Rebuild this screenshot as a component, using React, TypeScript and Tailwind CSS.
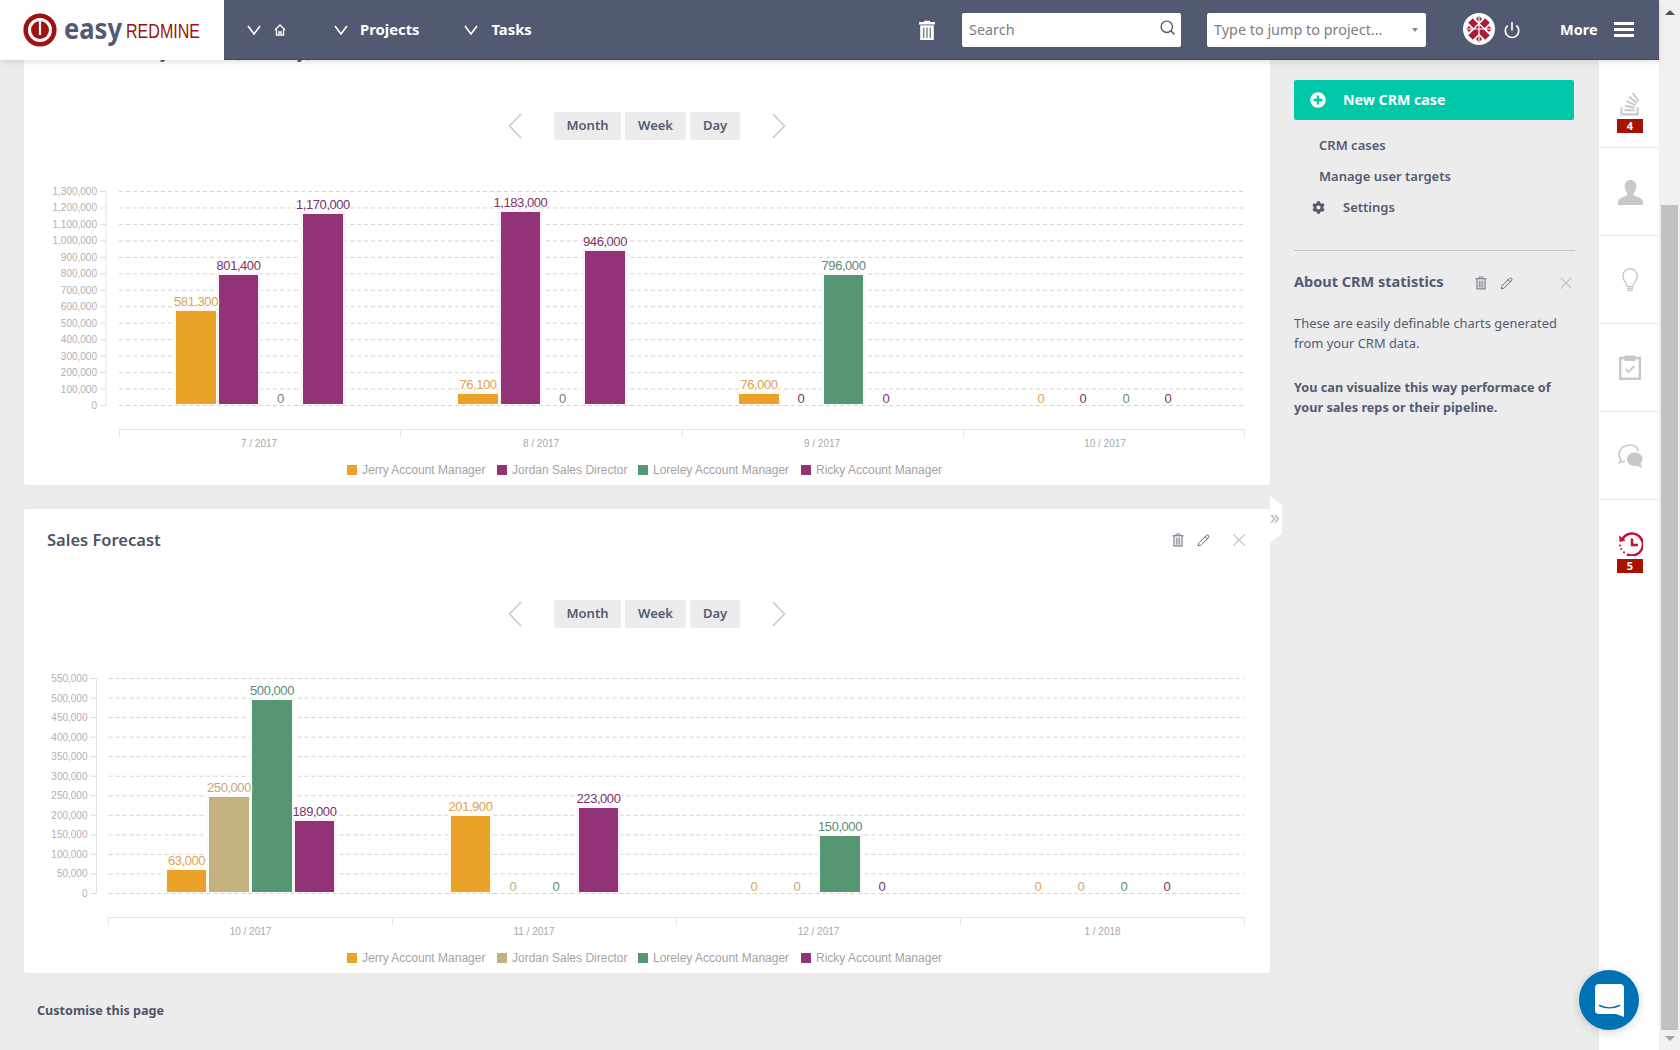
import { FaCog, FaPlusCircle, FaStackOverflow } from 'react-icons/fa';
import { Pencil, Power, Search } from 'lucide-react';

const ui = '[font-family:"Noto_Sans",sans-serif]';

const ORANGE = '#e9a227';
const PURPLE = '#933377';
const GREEN = '#579673';
const TAN = '#c3b17f';

// data labels are a bit duller than the bars
const labelColor: Record<string, string> = {
  [ORANGE]: '#dfa24f',
  [PURPLE]: '#7e3069',
  [GREEN]: '#5d8a75',
  [TAN]: '#b9ab85',
};

type Bar = { x0: number; x1: number; top: number; label: string; color: string };
type Zero = { x: number; color: string };

type ChartProps = {
  top: number;
  ticks: string[];
  gridTop: number;
  gridBottom: number;
  axisX: number;
  gridX: number;
  labelX: number;
  barBottom: number;
  bars: Bar[];
  zeros: Zero[];
  zeroY: number;
  baseY: number;
  baseTicks: number[];
  periods: { x: number; label: string }[];
};

function Chart(p: ChartProps) {
  const step = (p.gridBottom - p.gridTop) / (p.ticks.length - 1);
  return (
    <svg
      viewBox={`24 ${p.top} 1246 282`}
      className="block h-[282px] w-[1246px]"
      fontFamily='"Liberation Sans", Arial, sans-serif'
    >
      {p.ticks.map((t, i) => {
        const y = p.gridTop + i * step;
        return (
          <g key={t}>
            <line x1={p.gridX} x2={1244} y1={y} y2={y} stroke="#d4d4d4" strokeDasharray="4 3" />
            <line x1={p.axisX - 6} x2={p.axisX} y1={y} y2={y} stroke="#dcdcdc" />
            <text x={p.labelX} y={y} textAnchor="end" dominantBaseline="central" fontSize="10" fill="#b0b0b0">
              {t}
            </text>
          </g>
        );
      })}
      <line x1={p.axisX} x2={p.axisX} y1={p.gridTop} y2={p.gridBottom} stroke="#e2e2e2" />

      {p.bars.map((b) => (
        <g key={b.label + b.x0}>
          <rect x={b.x0 - 2.5} y={b.top - 2.5} width={b.x1 - b.x0 + 5} height={p.barBottom - b.top + 3} fill="#fff" />
          <rect x={b.x0 - 2.5} y={b.top - 2.5} width={b.x1 - b.x0 + 5} height={p.barBottom - b.top + 3} fill={b.color} opacity="0.06" />
          <rect x={b.x0} y={b.top} width={b.x1 - b.x0} height={p.barBottom - b.top} fill={b.color} />
        </g>
      ))}
      {p.bars.map((b) => (
        <text
          key={b.label + b.x0}
          x={(b.x0 + b.x1) / 2}
          y={b.top - 9.5}
          textAnchor="middle"
          dominantBaseline="central"
          fontSize="13"
          letterSpacing="-0.45"
          fill={labelColor[b.color]}
          stroke="#fff"
          strokeWidth="2"
          paintOrder="stroke"
        >
          {b.label}
        </text>
      ))}
      {p.zeros.map((z) => (
        <text
          key={z.x}
          x={z.x}
          y={p.zeroY}
          textAnchor="middle"
          dominantBaseline="central"
          fontSize="13"
          fill={labelColor[z.color]}
          stroke="#fff"
          strokeWidth="2"
          paintOrder="stroke"
        >
          0
        </text>
      ))}

      <line x1={p.gridX} x2={1245} y1={p.baseY} y2={p.baseY} stroke="#e4e4e4" />
      {p.baseTicks.map((x) => (
        <line key={x} x1={x} x2={x} y1={p.baseY} y2={p.baseY + 7} stroke="#e4e4e4" />
      ))}
      {p.periods.map((d) => (
        <text key={d.label} x={d.x} y={p.baseY + 14} textAnchor="middle" dominantBaseline="central" fontSize="10" fill="#a8a8a8">
          {d.label}
        </text>
      ))}
    </svg>
  );
}

function TrashIcon({ className }: { className: string }) {
  return (
    <svg viewBox="0 0 16 18" className={className} fill="none" stroke="currentColor">
      <path d="M1 3.5h14" strokeWidth="1.6" />
      <path d="M5.5 3V1.2h5V3" strokeWidth="1.2" />
      <path d="M2.8 4v12.6h10.4V4" strokeWidth="1.5" />
      <path d="M5.8 6v9M8 6v9M10.2 6v9" strokeWidth="1.2" />
    </svg>
  );
}

function HeaderTrash() {
  return (
    <svg viewBox="0 0 16 20" className="h-5 w-4">
      <path d="M5 2V.8h6V2h5v2.400H0V2z" fill="#fff" />
      <path d="M1.200 5.400h13.600V20H1.200z" fill="#fff" />
      <path d="M4.700 7.500v10.500M8 7.500v10.500M11.300 7.500v10.500" stroke="#7b8295" strokeWidth="1.400" />
    </svg>
  );
}

function CloseIcon() {
  return (
    <svg viewBox="0 0 12 12" className="h-3 w-3" stroke="#c9c9c9" strokeWidth="1.4">
      <path d="M.5.5l11 11M11.5.5l-11 11" />
    </svg>
  );
}

function ChevronDown() {
  return (
    <svg viewBox="0 0 14 10" className="h-[10px] w-[14px]" fill="none" stroke="#fff" strokeWidth="1.6">
      <path d="M1 1l6 8 6-8" />
    </svg>
  );
}

function Pager({ dir }: { dir: 'left' | 'right' }) {
  return (
    <svg viewBox="0 0 14 26" className="h-[26px] w-[14px]" fill="none" stroke="#c9c9c9" strokeWidth="1.6">
      <path d={dir === 'left' ? 'M13 1L1.5 13 13 25' : 'M1 1l11.5 12L1 25'} />
    </svg>
  );
}

function Card({ title, chart, legend }: { title: string; chart: ChartProps; legend: { color: string; label: string; w: string }[] }) {
  return (
    <section className="h-[464px] w-[1246px] rounded-[3px] bg-white">
      <div className="flex h-[62px] items-center pl-[23px] pr-[25px]">
        <h2 className="mt-px text-[16.500px] font-semibold text-[#4c5468]">{title}</h2>
        <div className="ml-auto flex items-center">
          <TrashIcon className="h-[14px] w-[14px] text-[#7b8190]" />
          <Pencil className="ml-3 h-[13px] w-[13px] text-[#555b6b]" strokeWidth={1.7} />
          <span className="ml-[23px]"><CloseIcon /></span>
        </div>
      </div>
      <div className="mt-[29px] flex items-center justify-center">
        <Pager dir="left" />
        <div className="mx-8 flex gap-1 text-[13px] font-semibold text-[#525b73]">
          <button className="flex h-7 w-[67px] items-center justify-center rounded-[2px] bg-[#ececec]">Month</button>
          <button className="flex h-7 w-[61px] items-center justify-center rounded-[2px] bg-[#ececec]">Week</button>
          <button className="flex h-7 w-[50px] items-center justify-center rounded-[2px] bg-[#ececec]">Day</button>
        </div>
        <Pager dir="right" />
      </div>
      <div className="mt-[31px]">
        <Chart {...chart} />
      </div>
      <div className='mt-[7px] flex h-5 items-center pl-[323px] text-[12px] text-[#a3a3a3] [font-family:"Liberation_Sans",Arial,sans-serif]'>
        {legend.map((l) => (
          <div key={l.label} className={`flex items-center ${l.w}`}>
            <span className="mr-[5px] h-[10px] w-[10px]" style={{ background: l.color }} />
            {l.label}
          </div>
        ))}
      </div>
    </section>
  );
}

const salesChart: ChartProps = {
  top: 171,
  ticks: ['1,300,000', '1,200,000', '1,100,000', '1,000,000', '900,000', '800,000', '700,000', '600,000', '500,000', '400,000', '300,000', '200,000', '100,000', '0'],
  gridTop: 191.5,
  gridBottom: 405.5,
  axisX: 106,
  gridX: 119,
  labelX: 97,
  barBottom: 404,
  bars: [
    { x0: 176, x1: 216, top: 311, label: '581,300', color: ORANGE },
    { x0: 219, x1: 258, top: 275, label: '801,400', color: PURPLE },
    { x0: 303, x1: 343, top: 214, label: '1,170,000', color: PURPLE },
    { x0: 458, x1: 498, top: 394, label: '76,100', color: ORANGE },
    { x0: 501, x1: 540, top: 212, label: '1,183,000', color: PURPLE },
    { x0: 585, x1: 625, top: 251, label: '946,000', color: PURPLE },
    { x0: 739, x1: 779, top: 394, label: '76,000', color: ORANGE },
    { x0: 824, x1: 863, top: 275, label: '796,000', color: GREEN },
  ],
  zeros: [
    { x: 280.5, color: GREEN },
    { x: 562.5, color: GREEN },
    { x: 801, color: PURPLE },
    { x: 886, color: PURPLE },
    { x: 1041, color: ORANGE },
    { x: 1083, color: PURPLE },
    { x: 1126, color: GREEN },
    { x: 1168, color: PURPLE },
  ],
  zeroY: 398,
  baseY: 429.5,
  baseTicks: [119.5, 400.5, 682.5, 963.5, 1244.5],
  periods: [
    { x: 259, label: '7 / 2017' },
    { x: 541, label: '8 / 2017' },
    { x: 822, label: '9 / 2017' },
    { x: 1105, label: '10 / 2017' },
  ],
};

const forecastChart: ChartProps = {
  top: 659,
  ticks: ['550,000', '500,000', '450,000', '400,000', '350,000', '300,000', '250,000', '200,000', '150,000', '100,000', '50,000', '0'],
  gridTop: 678.5,
  gridBottom: 893.5,
  axisX: 96.5,
  gridX: 108.5,
  labelX: 87.5,
  barBottom: 892,
  bars: [
    { x0: 167, x1: 206, top: 870, label: '63,000', color: ORANGE },
    { x0: 209, x1: 249, top: 797, label: '250,000', color: TAN },
    { x0: 252, x1: 292, top: 700, label: '500,000', color: GREEN },
    { x0: 295, x1: 334, top: 821, label: '189,000', color: PURPLE },
    { x0: 451, x1: 490, top: 816, label: '201,900', color: ORANGE },
    { x0: 579, x1: 618, top: 808, label: '223,000', color: PURPLE },
    { x0: 820, x1: 860, top: 836, label: '150,000', color: GREEN },
  ],
  zeros: [
    { x: 513, color: TAN },
    { x: 556, color: GREEN },
    { x: 754, color: ORANGE },
    { x: 797, color: TAN },
    { x: 882, color: PURPLE },
    { x: 1038, color: ORANGE },
    { x: 1081, color: TAN },
    { x: 1124, color: GREEN },
    { x: 1167, color: PURPLE },
  ],
  zeroY: 886,
  baseY: 917.5,
  baseTicks: [108.5, 392.5, 676.5, 960.5, 1244.5],
  periods: [
    { x: 250.5, label: '10 / 2017' },
    { x: 534, label: '11 / 2017' },
    { x: 818.5, label: '12 / 2017' },
    { x: 1102.5, label: '1 / 2018' },
  ],
};

const salesLegend = [
  { color: ORANGE, label: 'Jerry Account Manager', w: 'w-[150px]' },
  { color: PURPLE, label: 'Jordan Sales Director', w: 'w-[141px]' },
  { color: GREEN, label: 'Loreley Account Manager', w: 'w-[163px]' },
  { color: PURPLE, label: 'Ricky Account Manager', w: 'w-[150px]' },
];

const forecastLegend = [
  { color: ORANGE, label: 'Jerry Account Manager', w: 'w-[150px]' },
  { color: TAN, label: 'Jordan Sales Director', w: 'w-[141px]' },
  { color: GREEN, label: 'Loreley Account Manager', w: 'w-[163px]' },
  { color: PURPLE, label: 'Ricky Account Manager', w: 'w-[150px]' },
];

function Logo() {
  return (
    <svg viewBox="0 0 224 60" className="h-[60px] w-[224px]">
      <circle cx="40" cy="30" r="14.300" fill="#fff" stroke="#a01212" strokeWidth="4.600" />
      <circle cx="40" cy="30" r="9" fill="#a01212" />
      <rect x="38.900" y="20" width="2.200" height="15" fill="#fff" />
      <text x="64" y="39" fontSize="29" fontWeight="700" fill="#525b73" fontFamily='"Noto Sans", sans-serif' textLength="58" lengthAdjust="spacingAndGlyphs">
        easy
      </text>
      <text x="126" y="38" fontSize="21" fill="#961616" fontFamily='"Liberation Sans", sans-serif' textLength="74" lengthAdjust="spacingAndGlyphs">
        REDMINE
      </text>
    </svg>
  );
}

function Avatar() {
  return (
    <svg viewBox="0 0 32 32" className="h-8 w-8">
      <circle cx="16" cy="16" r="16" fill="#fff" />
      <g stroke="#aa1c35" strokeWidth="6.500">
        <path d="M7.500 7.500l17 17M24.500 7.500l-17 17" />
      </g>
      <g fill="#aa1c35">
        <path d="M16 2.500l3 3.500-3 3.500-3-3.500zM16 22.500l3 3.500-3 3.500-3-3.500zM6 13l3 3-3 3-3-3zM26 13l3 3-3 3-3-3z" />
      </g>
      <path d="M16 3v26M3 16h26M10.500 5l16 16M21.500 5l-16 16" stroke="#fff" strokeWidth="1.200" />
    </svg>
  );
}

function Badge({ n }: { n: number }) {
  return (
    <div className="mt-[3px] flex h-[14px] w-[26px] items-center justify-center bg-[#a81200] text-[11px] font-bold text-white">{n}</div>
  );
}

function Sidebar() {
  return (
    <aside className="flex w-[60px] flex-col bg-white pt-[60px]">
      <div className="flex h-[88px] flex-col items-center border-b border-[#ececec] pl-[2px] pt-[31px]">
        <FaStackOverflow className="h-[26px] w-[26px] text-[#cbcbcb]" />
        <div className="-mt-px"><Badge n={4} /></div>
      </div>
      <div className="flex h-[88px] flex-col items-center border-b border-[#ececec] pl-[2px] pt-8">
        <svg viewBox="0 0 25 25" className="h-[25px] w-[25px]" fill="#c8c8c8">
          <path d="M12.500 0c3.700 0 5.800 2.700 5.800 6.300 0 2.600-1 5-2.500 6.500v2.300c0 1.200 8 2 9.200 6.400V25H0v-3.500c1.200-4.400 9.200-5.200 9.200-6.400v-2.300C7.700 11.300 6.700 8.900 6.700 6.300 6.700 2.700 8.800 0 12.500 0z" />
        </svg>
      </div>
      <div className="flex h-[88px] flex-col items-center border-b border-[#ececec] pl-[2px] pt-8">
        <svg viewBox="0 0 16 25" className="h-[25px] w-4" fill="none" stroke="#c8c8c8" strokeWidth="1.4">
          <path d="M5 18.500c0-3.500-4.200-5.500-4.200-10.500C.8 3.800 4 .8 8 .8s7.200 3 7.200 7.200c0 5-4.200 7-4.200 10.500z" />
          <path d="M5 20.500h6M5.500 22.500h5" strokeWidth="1.6" />
        </svg>
      </div>
      <div className="flex h-[88px] flex-col items-center border-b border-[#ececec] pl-[2px] pt-[31px]">
        <svg viewBox="0 0 22 25" className="h-[25px] w-[22px]" fill="none" stroke="#c8c8c8">
          <path d="M6 3H1.200v20.800h19.600V3H16" strokeWidth="2.400" />
          <path d="M6 1h10v4.500H6z" fill="#c8c8c8" strokeWidth="1" />
          <path d="M6.500 14l3 3 6-6" strokeWidth="1.800" />
        </svg>
      </div>
      <div className="flex h-[88px] flex-col items-center border-b border-[#ececec] pl-[2px] pt-8">
        <svg viewBox="0 0 25 24" className="h-6 w-[25px]">
          <path d="M20.500 7.500C19.500 3.500 16 1 12 1 6 1 1 5 1 10.500c0 2 .8 3.800 2 5.200L1.500 18.500l5.500-1.500" fill="none" stroke="#c8c8c8" strokeWidth="1.600" />
          <path d="M16.500 8.500c4.400 0 8 2.700 8 6.500 0 1.800-.8 3.400-2 4.500L24.500 24l-6-2.200c-.6.100-1.300.2-2 .2-4.400 0-7.500-3-7.500-6.700 0-3.800 3.100-6.800 7.500-6.800z" fill="#c8c8c8" />
        </svg>
      </div>
      <div className="flex flex-1 flex-col items-center pl-[2px] pt-8">
        <svg viewBox="0 0 25 24" className="h-6 w-[25px]" fill="none" stroke="#c8102e" strokeWidth="2.500">
          <path d="M4.700 6.500A11 11 0 1 1 9 22.300" />
          <path d="M1 3.500l.6 6.600 6.300-1.700z" fill="#c8102e" stroke="none" />
          <path d="M14 6.500V13h6" />
          <path d="M2 13.500v.1M3.200 17v.1M6 20.300v.1" strokeLinecap="round" strokeWidth="2" />
        </svg>
        <Badge n={5} />
      </div>
    </aside>
  );
}

function Header() {
  return (
    <header className={`absolute left-0 top-0 z-10 flex h-[60px] w-[1659px] items-center border-b border-[#41485c] bg-[#525a71] text-white shadow-[0_2px_6px_rgba(0,0,0,0.12)] ${ui}`}>
      <div className="h-[60px] w-[224px] shrink-0 bg-white">
        <Logo />
      </div>
      <nav className="ml-[23px] flex items-center text-[14.800px] font-bold">
        <ChevronDown />
        <svg viewBox="0 0 12 12" className="ml-[13px] h-3 w-3" fill="none" stroke="#fff" strokeWidth="1.300">
          <path d="M1 6l5-5 5 5M2.500 5.500v5.700h7V5.500M5 11V8h2v3" />
        </svg>
        <span className="ml-[48px]"><ChevronDown /></span>
        <span className="ml-3">Projects</span>
        <span className="ml-[45px]"><ChevronDown /></span>
        <span className="ml-[13px]">Tasks</span>
      </nav>
      <div className="ml-auto flex items-center pr-[25px]">
        <HeaderTrash />
        <div className="ml-[27px] flex h-[34px] w-[219px] items-center justify-between rounded-[2px] bg-white pl-[7px] pr-[5px] text-[14.400px] text-[#7d7d7d]">
          <span className="pt-px">Search</span>
          <Search className="mb-1 h-[17px] w-[17px] text-[#5c5c5c]" strokeWidth={2} />
        </div>
        <div className="ml-[26px] flex h-[34px] w-[219px] items-center justify-between rounded-[2px] bg-white pl-[7px] pr-[6px] text-[14.400px] text-[#7d7d7d]">
          <span className="pt-px">Type to jump to project...</span>
          <span className="mr-[2px] h-0 w-0 border-x-[3px] border-t-[4px] border-x-transparent border-t-[#8a8a8a]" />
        </div>
        <div className="mb-[2px] ml-[37px]"><Avatar /></div>
        <Power className="ml-2 h-[18px] w-[18px] text-white" strokeWidth={2.2} />
        <span className="ml-[39px] w-[38px] text-[14.500px] font-bold">More</span>
        <div className="ml-4 flex h-[15px] w-5 flex-col justify-between">
          <span className="h-[3px] bg-white" />
          <span className="h-[3px] bg-white" />
          <span className="h-[3px] bg-white" />
        </div>
      </div>
    </header>
  );
}

function SidePanel() {
  return (
    <aside className="w-[329px] shrink-0 px-6 pt-[80px] text-[#525b73]">
      <button className="flex h-10 w-[280px] items-center rounded-[2px] bg-[#00c8a9] pl-4 text-[14.200px] font-bold text-white">
        <FaPlusCircle className="h-4 w-4" />
        <span className="mb-px ml-[17px]">New CRM case</span>
      </button>
      <div className="mt-[10px] text-[13px] font-semibold">
        <div className="flex h-[31px] items-center pl-[25px]">CRM cases</div>
        <div className="flex h-[31px] items-center pl-[25px]">Manage user targets</div>
        <div className="flex h-[31px] items-center pl-[18px]">
          <FaCog className="h-[13px] w-[13px]" />
          <span className="ml-[18px]">Settings</span>
        </div>
      </div>
      <div className="mt-[27px] h-[21px] border-t border-[#c6c6c6]" />
      <div className="flex h-6 items-center">
        <h3 className="mb-[3px] w-[180px] text-[14.500px] font-bold">About CRM statistics</h3>
        <TrashIcon className="h-[14px] w-[14px] text-[#7b8190]" />
        <Pencil className="ml-3 h-[13px] w-[13px] text-[#555b6b]" strokeWidth={1.7} />
        <span className="ml-[47px]"><CloseIcon /></span>
      </div>
      <p className="mt-[18px] text-[12.900px] leading-5">
        These are easily definable charts generated
        <br />
        from your CRM data.
      </p>
      <p className="mt-6 text-[12.700px] font-bold leading-5">
        You can visualize this way performace of
        <br />
        your sales reps or their pipeline.
      </p>
    </aside>
  );
}

export default function App() {
  return (
    <div className={`relative flex h-screen w-full overflow-hidden bg-[#ececec] ${ui}`}>
      <Header />

      <main className="w-[1270px] shrink-0 pl-6 pt-[21px]">
        <div className="flex flex-col gap-6">
          <Card title="Closed Sales by Person (Monthly)" chart={salesChart} legend={salesLegend} />
          <Card title="Sales Forecast" chart={forecastChart} legend={forecastLegend} />
        </div>
        <div className="ml-[13px] mt-[29px] text-[12.600px] font-bold text-[#4c5468]">Customise this page</div>
      </main>

      <SidePanel />
      <Sidebar />

      {/* scrollbar */}
      <div className="relative w-[21px] shrink-0 bg-[#f1f1f1]">
        <span className="absolute left-[6px] top-[10px] h-0 w-0 border-x-[5px] border-b-[5px] border-x-transparent border-b-[#505050]" />
        <div className="absolute left-[2px] top-[205px] h-[825px] w-[17px] bg-[#c1c1c1]" />
        <span className="absolute bottom-[9px] left-[6px] h-0 w-0 border-x-[5px] border-t-[5px] border-x-transparent border-t-[#a3a3a3]" />
      </div>

      {/* collapse tab */}
      <div className="absolute left-[1270px] top-[496px] flex h-[47px] w-3 items-center bg-white pb-[5px] text-[19px] leading-none text-[#b8b8b8] [clip-path:polygon(0_0,100%_20%,100%_80%,0_100%)]">
        »
      </div>

      {/* chat bubble */}
      <div className="absolute left-[1579px] top-[970px] z-20 flex h-[60px] w-[60px] items-center justify-center rounded-full bg-[#0071b2] shadow-[0_2px_10px_rgba(0,0,0,0.18)]">
        <svg viewBox="0 0 29 33" className="h-[33px] w-[29px]">
          <path d="M4 0h21a4 4 0 0 1 4 4v29l-8-3H4a4 4 0 0 1-4-4V4a4 4 0 0 1 4-4z" fill="#fff" />
          <path d="M4.500 21.500c6 3 14 3 20 0" fill="none" stroke="#0071b2" strokeWidth="1.600" strokeLinecap="round" />
        </svg>
      </div>
    </div>
  );
}
